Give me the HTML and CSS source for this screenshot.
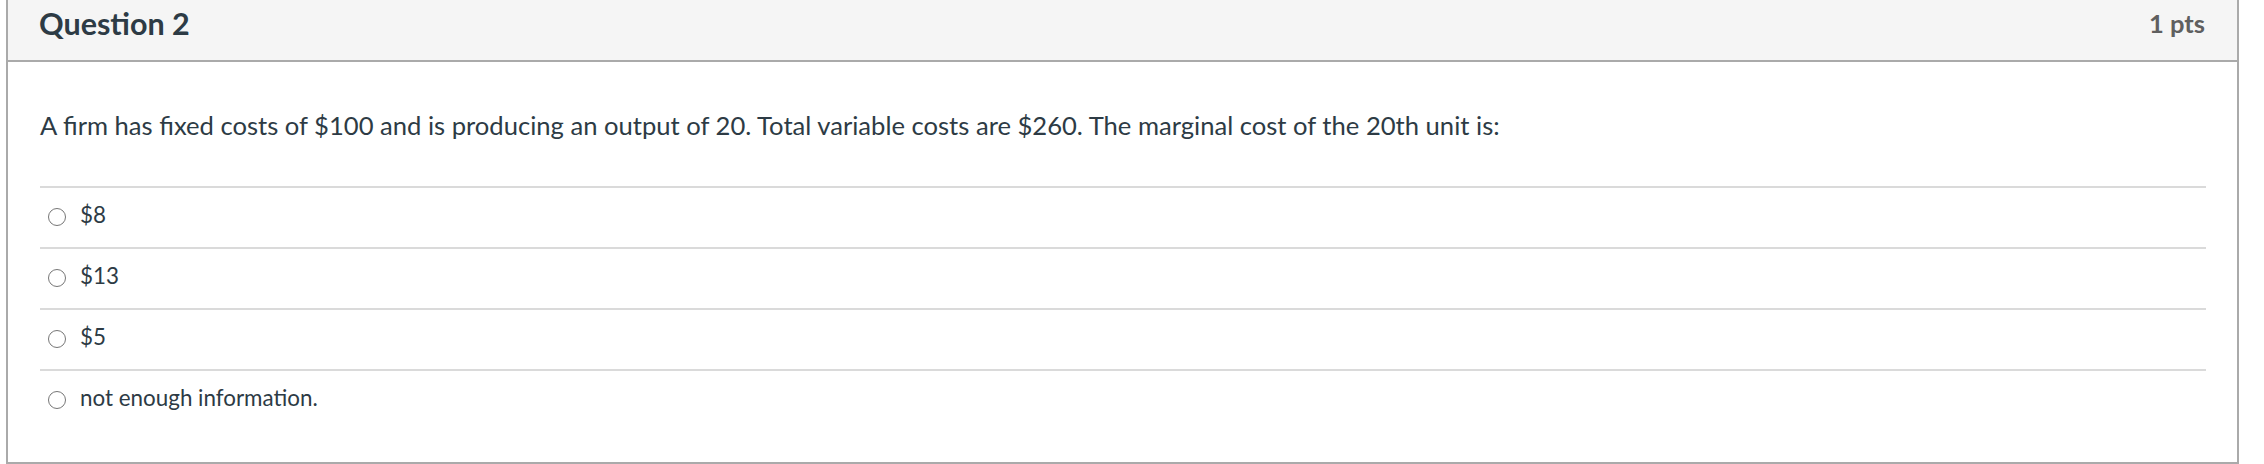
FILE: index.html
```html
<!DOCTYPE html>
<html lang="en">
<head>
<meta charset="utf-8">
<title>Question 2</title>
<link rel="stylesheet" href="styles.css">
</head>
<body>
<div class="question">
  <div class="question-header">
    <h2 class="question-title">Question 2</h2>
    <span class="question-points">1 pts</span>
  </div>
  <div class="question-body">
    <p class="question-text">A firm has fixed costs of $100 and is producing an output of 20. Total variable costs are $260. The marginal cost of the 20th unit is:</p>
    <div class="answers">
      <label class="answer"><span class="radio"></span><span class="answer-text">$8</span></label>
      <label class="answer"><span class="radio"></span><span class="answer-text">$13</span></label>
      <label class="answer"><span class="radio"></span><span class="answer-text">$5</span></label>
      <label class="answer"><span class="radio"></span><span class="answer-text">not enough information.</span></label>
    </div>
  </div>
</div>
</body>
</html>
```
FILE: styles.css
```css
html, body {
  margin: 0;
  padding: 0;
  background: #fff;
}
body {
  font-family: Lato, "Noto Sans", "Liberation Sans", sans-serif;
  color: #2d3b45;
}
.question {
  margin-left: 6px;
  width: 2229px;
  height: 462px;
  border: 2px solid #aaaaaa;
  border-top: none;
}
.question-header {
  box-sizing: border-box;
  height: 62px;
  background: #f5f5f5;
  border-bottom: 2px solid #aaaaaa;
  padding: 5px 32px 0 31px;
  display: flex;
  justify-content: space-between;
  align-items: flex-start;
}
.question-title {
  margin: 0;
  font-size: 30.5px;
  line-height: 1.2;
  font-weight: 700;
  color: #2d3b45;
}
.question-points {
  margin-top: 3px;
  font-size: 25.5px;
  line-height: 1.2;
  font-weight: 700;
  color: #5f5f5f;
}
.question-body {
  padding: 0 31px 0 32px;
}
.question-text {
  margin: 0;
  padding-top: 48px;
  font-size: 25.6px;
  line-height: 31px;
}
.answers {
  margin-top: 45px;
}
.answer {
  box-sizing: border-box;
  display: flex;
  align-items: flex-start;
  height: 61px;
  padding-top: 14px;
  border-top: 2px solid #dadada;
  font-size: 22.4px;
  line-height: 26px;
}
.radio {
  box-sizing: border-box;
  width: 18px;
  height: 18px;
  margin: 5.5px 14px 0 8px;
  border: 1.5px solid #767676;
  border-radius: 50%;
  flex: none;
}
```
